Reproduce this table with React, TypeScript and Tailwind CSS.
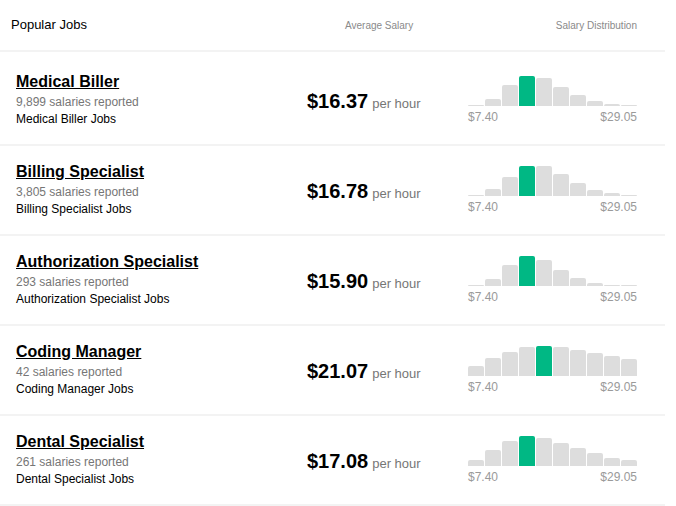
const jobs = [
  { title: "Medical Biller", count: "9,899", pay: "$16.37", bars: [1, 7, 21, 30, 28, 19, 11, 5, 2, 1], hi: 3 },
  { title: "Billing Specialist", count: "3,805", pay: "$16.78", bars: [1, 7, 19, 30, 30, 22, 13, 6, 3, 1], hi: 3 },
  { title: "Authorization Specialist", count: "293", pay: "$15.90", bars: [1, 7, 21, 30, 26, 16, 8, 3, 1, 1], hi: 3 },
  { title: "Coding Manager", count: "42", pay: "$21.07", bars: [10, 18, 24, 29, 30, 29, 26, 23, 20, 17], hi: 4 },
  { title: "Dental Specialist", count: "261", pay: "$17.08", bars: [6, 16, 25, 30, 28, 23, 18, 13, 8, 6], hi: 3 },
];

function Distribution({ bars, hi }: { bars: number[]; hi: number }) {
  return (
    <div className="w-[169px] pt-[20px]">
      <div className="flex h-[30px] items-end gap-px">
        {bars.map((h, i) => (
          <div
            key={i}
            className={`w-4 rounded-t-[2px] ${i === hi ? "bg-[#00b884]" : "bg-[#dddddd]"}`}
            style={{ height: h }}
          />
        ))}
      </div>
      <div className="mt-[4px] flex justify-between text-[12px] leading-[14px] text-[#9a9a9a]">
        <span>$7.40</span>
        <span>$29.05</span>
      </div>
    </div>
  );
}

export default function App() {
  return (
    <div className="w-[665px] bg-white font-['Liberation_Sans',Arial,sans-serif]">
      <div className="mb-1 flex h-[52px] items-center border-b-2 border-[#f3f3f3] pr-[28px]">
        <div className="flex-1 pl-[11px] text-[13px] text-black">Popular Jobs</div>
        <div className="w-[161px] pl-[38px] text-[10px] text-[#8a8a8a]">Average Salary</div>
        <div className="w-[169px] text-right text-[10px] text-[#8a8a8a]">Salary Distribution</div>
      </div>

      {jobs.map((job) => (
        <div key={job.title} className="flex h-[90px] items-start border-b-2 border-[#f3f3f3] pr-[28px]">
          <div className="flex-1 pl-4 pt-[16px]">
            <a href="#" className="block text-[16px] font-bold leading-[20px] text-black underline">
              {job.title}
            </a>
            <div className="mt-px text-[12px] leading-[18px] text-[#767676]">{job.count} salaries reported</div>
            <div className="text-[12px] leading-[17px] text-black">{job.title} Jobs</div>
          </div>
          <div className="flex w-[161px] items-baseline gap-1 pt-[33px]">
            <span className="text-[20px] font-bold leading-[24px] text-black">{job.pay}</span>
            <span className="text-[13px] text-[#767676]">per hour</span>
          </div>
          <Distribution bars={job.bars} hi={job.hi} />
        </div>
      ))}
    </div>
  );
}
